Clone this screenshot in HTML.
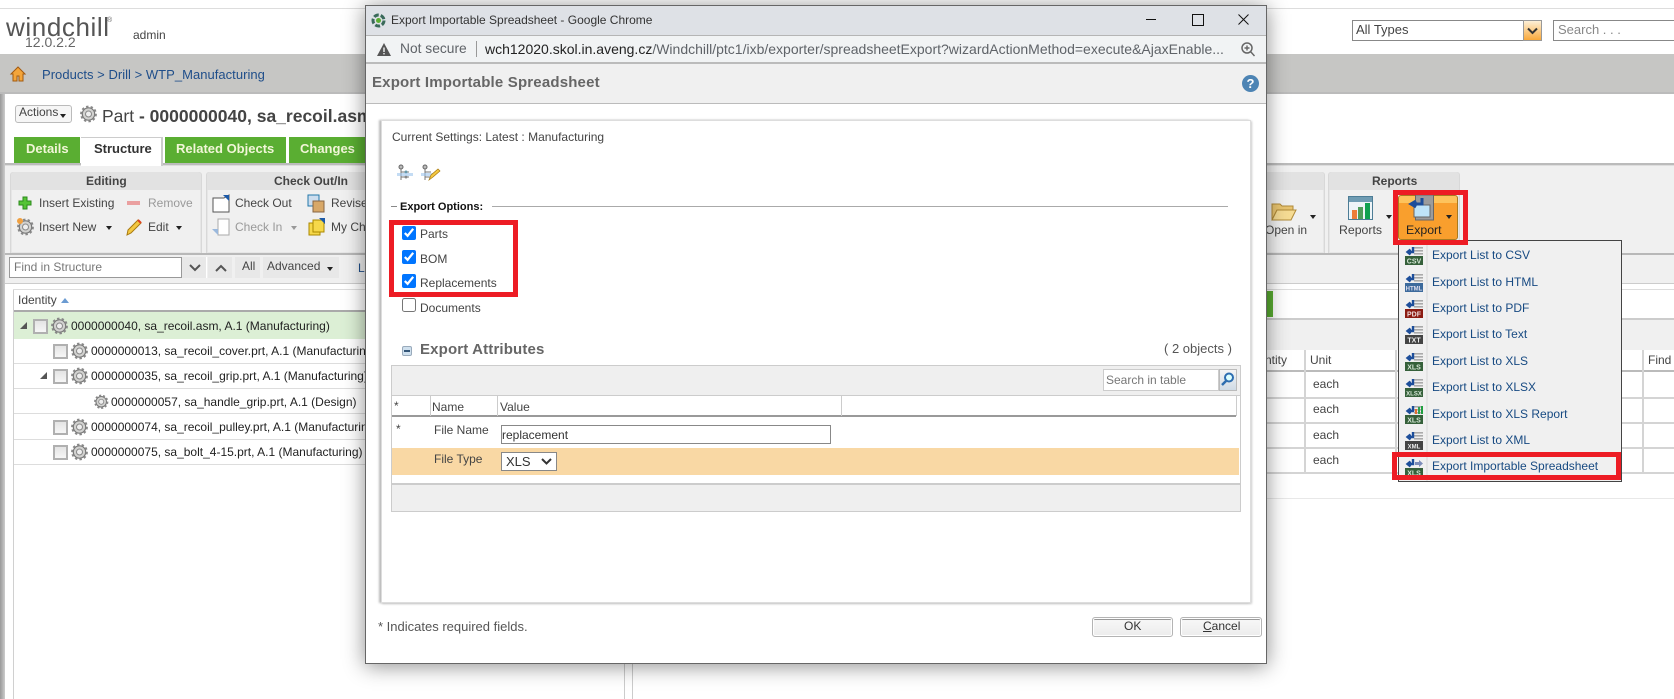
<!DOCTYPE html>
<html><head><meta charset="utf-8"><title>Export Importable Spreadsheet</title>
<style>
html,body{margin:0;padding:0;background:#fff;width:1674px;height:699px;overflow:hidden}
body{position:relative;font-family:"Liberation Sans",sans-serif;font-size:12px;color:#444}
.a{position:absolute}
.t{position:absolute;white-space:nowrap;line-height:16px;height:16px}
.car{position:absolute;width:0;height:0;border-left:3px solid transparent;border-right:3px solid transparent;border-top:4px solid #222}
.tab{position:absolute;top:137px;height:26px;background:#5aae32}
.b{font-weight:bold}
svg{position:absolute;overflow:visible}
.gh{position:absolute;top:172px;height:18px;background:#e2e2e2;border-radius:3px 3px 0 0}
.g{position:absolute;top:172px;height:81px;border:1px solid #d8d8d8;border-bottom:0;box-sizing:border-box;border-radius:3px 3px 0 0;box-shadow:0 0 0 1px #e6e6e6 inset}
.m{color:#174a82}
.line{position:absolute;background:#ccc}
.red{position:absolute;border:5px solid #ed1c24;box-sizing:border-box}
.cb{position:absolute;width:15px;height:15px;box-sizing:border-box;border:2px solid #b0b0b0;background:linear-gradient(#e4e4e4,#f6f6f6)}
input[type=checkbox]{position:absolute;margin:0;width:14px;height:14px}
.btn{position:absolute;height:20px;background:linear-gradient(#f8f8f8,#ececec);border:1px solid #b4b4b4;box-sizing:border-box;border-radius:3px;box-shadow:inset 0 0 0 1px #fff,inset 0 2px 0 #999}
</style></head><body>
<svg width="0" height="0" style="position:absolute"><defs>
<g id="gear"><circle cx="8.5" cy="8" r="6.2" fill="#d2d2d0" stroke="#777" stroke-width="1.2"/><circle cx="8.5" cy="8" r="7.4" fill="none" stroke="#888" stroke-width="2" stroke-dasharray="2.4 2.2"/><circle cx="8.5" cy="8" r="3" fill="#eee" stroke="#888"/></g>
<g id="exp"><rect x="9" y="0" width="9" height="1.6" fill="#aaa"/><rect x="9" y="3" width="9" height="1.6" fill="#aaa"/><rect x="9" y="6" width="9" height="1.6" fill="#aaa"/><path d="M8 0v5H3M5.5 2.5L2.5 5l3 2.5" fill="none" stroke="#1d4e9a" stroke-width="2.4"/></g>
</defs></svg>

<!-- top header -->
<div class="a" style="left:0;top:8px;width:1674px;height:1px;background:#ddd"></div>
<div class="t" style="left:6px;top:11px;height:32px;line-height:32px;font-size:26px;color:#555;letter-spacing:.6px;font-weight:normal">windchill</div>
<div class="t" style="left:107px;top:13px;font-size:7px;color:#666">®</div>
<div class="t" style="left:25px;top:34px;font-size:14px;color:#666">12.0.2.2</div>
<div class="t" style="left:133px;top:27px;color:#444">admin</div>

<div class="a" style="left:1352px;top:20px;width:190px;height:21px;border:1px solid #888;box-sizing:border-box;background:#fff"></div>
<div class="t" style="left:1356px;top:22px;font-size:13px;color:#444">All Types</div>
<div class="a" style="left:1523px;top:20px;width:19px;height:21px;background:linear-gradient(#fdf0d8,#f9a83a);border:1px solid #999;box-sizing:border-box"></div>
<svg style="left:1527px;top:27px" width="11" height="8"><path d="M1 1.5l4.5 4.5 4.5-4.5" fill="none" stroke="#333" stroke-width="2"/></svg>
<div class="a" style="left:1553px;top:20px;width:125px;height:21px;border:1px solid #888;box-sizing:border-box;background:#fff"></div>
<div class="t" style="left:1558px;top:22px;font-size:13px;color:#888">Search . . .</div>

<!-- grey nav -->
<div class="a" style="left:0;top:54px;width:1674px;height:38px;background:#c6c6c4"></div>
<div class="a" style="left:0;top:92px;width:1674px;height:2px;background:#bbb"></div>
<svg style="left:10px;top:66px" width="16" height="16"><path d="M8 1L1 8h2v7h4v-5h2v5h4V8h2z" fill="#f4a53a" stroke="#a25a10"/></svg>
<div class="t" style="left:42px;top:67px;font-size:13px;color:#1f4e8a;letter-spacing:.03px">Products &gt; Drill &gt; WTP_Manufacturing</div>

<div class="a" style="left:0;top:94px;width:5px;height:605px;background:linear-gradient(90deg,#999,#ccc)"></div>

<!-- title row -->
<div class="a" style="left:15px;top:105px;width:57px;height:18px;border:1px solid #bbb;border-radius:3px;box-sizing:border-box;background:#f6f6f6"></div>
<div class="t" style="left:19px;top:104px">Actions</div><div class="car" style="left:60px;top:114px"></div>
<svg style="left:80px;top:106px" width="17" height="16"><use href="#gear"/></svg>
<div class="t" style="left:102px;top:106px;height:20px;line-height:20px;font-size:17.5px;color:#444">Part<span class="b"> - 0000000040, sa_recoil.asm</span></div>

<!-- tabs -->
<div class="tab" style="left:14px;width:66px"></div><div class="t b" style="left:26px;top:141px;font-size:13px;color:#f2f6d8">Details</div>
<div class="a" style="left:81px;top:137px;width:82px;height:29px;background:#fff;border-top:1px solid #ccc;border-right:2px solid #ccc;box-sizing:border-box;z-index:2"></div><div class="t b" style="left:94px;top:141px;font-size:13px;color:#333;z-index:3">Structure</div>
<div class="tab" style="left:165px;width:121px"></div><div class="t b" style="left:176px;top:141px;font-size:13px;color:#f2f6d8">Related Objects</div>
<div class="tab" style="left:289px;width:76px"></div><div class="t b" style="left:300px;top:141px;font-size:13px;color:#f2f6d8">Changes</div>

<!-- toolbar -->
<div class="a" style="left:5px;top:163px;width:1669px;height:2px;background:#bbb"></div>
<div class="a" style="left:5px;top:165px;width:1669px;height:88px;background:#f0f0f0;border-top:1px solid #ddd;box-sizing:border-box"></div>
<div class="a" style="left:5px;top:253px;width:1669px;height:2px;background:#b8b8b8"></div>
<div class="g" style="left:10px;width:192px"></div><div class="gh" style="left:11px;width:190px"></div>
<div class="t b" style="left:86px;top:173px;color:#444;font-weight:bold">Editing</div>
<div class="g" style="left:206px;width:180px"></div><div class="gh" style="left:207px;width:178px"></div>
<div class="t b" style="left:274px;top:173px;color:#444">Check Out/In</div>
<svg style="left:18px;top:196px" width="14" height="14"><path d="M5 1h4v4h4v4H9v4H5V9H1V5h4z" fill="#55c435" stroke="#2b8a1c"/></svg>
<div class="t" style="left:39px;top:195px">Insert Existing</div>
<div class="a" style="left:127px;top:201px;width:13px;height:4px;background:#eaa0a0"></div>
<div class="t" style="left:148px;top:195px;color:#999">Remove</div>
<svg style="left:17px;top:219px" width="17" height="16"><use href="#gear"/></svg>
<div class="a" style="left:17px;top:218px;width:6px;height:6px;background:#f0a040;border-radius:3px"></div>
<div class="t" style="left:39px;top:219px">Insert New</div><div class="car" style="left:106px;top:226px"></div>
<svg style="left:125px;top:218px" width="18" height="18"><path d="M2 17l1-5L13 2l3 3L6 15z" fill="#f4c842" stroke="#a87a10"/><path d="M13 2l3 3" stroke="#e04020" stroke-width="2"/></svg>
<div class="t" style="left:148px;top:219px">Edit</div><div class="car" style="left:176px;top:226px"></div>
<svg style="left:212px;top:195px" width="18" height="18"><path d="M1 3h11l5-3v17H1z" fill="#fff" stroke="#555"/><path d="M11 0h6v6z" fill="#1d5aa8"/></svg>
<div class="t" style="left:235px;top:195px">Check Out</div>
<svg style="left:307px;top:195px" width="18" height="18"><rect x="1" y="0" width="11" height="11" fill="#cde" stroke="#27a"/><rect x="6" y="6" width="11" height="11" fill="#d8a868" stroke="#864"/></svg>
<div class="t" style="left:331px;top:195px">Revise</div>
<svg style="left:212px;top:218px" width="18" height="18"><path d="M6 1h11v16H6z" fill="#fff" stroke="#aaa"/><path d="M0 11h6v6z" fill="#9ab8dc"/></svg>
<div class="t" style="left:235px;top:219px;color:#999">Check In</div><div class="car" style="left:291px;top:226px;border-top-color:#999"></div>
<svg style="left:308px;top:218px" width="18" height="18"><rect x="1" y="5" width="11" height="12" fill="#f6d84a" stroke="#a80"/><rect x="5" y="2" width="11" height="12" fill="#f6d84a" stroke="#a80"/><path d="M11 0h6v6z" fill="#1d5aa8"/></svg>
<div class="t" style="left:331px;top:219px">My Ch</div>

<div class="g" style="left:1200px;width:125px"></div><div class="gh" style="left:1201px;width:123px"></div>
<div class="g" style="left:1328px;width:132px"></div><div class="gh" style="left:1329px;width:130px"></div>
<div class="t b" style="left:1372px;top:173px">Reports</div>
<svg style="left:1271px;top:202px" width="26" height="19"><path d="M1 18V2h8l2 2h11v4H6L1 18z" fill="#e8c470" stroke="#b08a38"/><path d="M1 18L6 8h19l-5 10z" fill="#f6dc94" stroke="#b08a38"/></svg>
<div class="t" style="left:1265px;top:222px;font-size:12px">Open in</div><div class="car" style="left:1310px;top:215px"></div>
<svg style="left:1348px;top:196px" width="25" height="25"><rect x=".5" y=".5" width="24" height="23" fill="#eef4f8" stroke="#4d7d96"/><rect x="1" y="1" width="23" height="5" fill="#6f9cb3"/><rect x="4" y="14" width="5" height="9" fill="#ee7d3a"/><rect x="10" y="11" width="5" height="12" fill="#4f9c5a"/><rect x="17" y="7" width="5" height="16" fill="#10a050"/></svg>
<div class="t" style="left:1339px;top:222px;font-size:12.3px">Reports</div><div class="car" style="left:1386px;top:215px"></div>

<div class="a" style="left:1398px;top:195px;width:60px;height:45px;background:linear-gradient(#fdc35c 0,#fdc35c 7px,#f99f2d 7px);border:1px solid #a87b20;box-sizing:border-box;border-radius:3px"></div>
<svg style="left:1409px;top:195px" width="26" height="26"><rect x="6.5" y="0" width="18" height="25" fill="#9c9c9c" stroke="#666"/><rect x="5" y="10" width="16" height="12" fill="#bfe4f8" stroke="#666"/><path d="M13 3v6H4M7 6L2 9l5 3" fill="none" stroke="#1d4e9a" stroke-width="3"/></svg>
<div class="t" style="left:1406px;top:222px;color:#222;font-size:12.3px">Export</div><div class="car" style="left:1446px;top:215px"></div>

<!-- find row -->
<div class="a" style="left:5px;top:255px;width:1669px;height:28px;background:#f0f0f0"></div>
<div class="a" style="left:5px;top:283px;width:1669px;height:1px;background:#ccc"></div>
<div class="a" style="left:9px;top:257px;width:173px;height:21px;background:#fff;border:1px solid #999;box-sizing:border-box"></div>
<div class="t" style="left:14px;top:259px;color:#777">Find in Structure</div>
<div class="a" style="left:182px;top:257px;width:24px;height:21px;background:#e8e8e8;border-right:1px solid #fff"></div>
<svg style="left:189px;top:264px" width="12" height="8"><path d="M1 1l5 5 5-5" fill="none" stroke="#555" stroke-width="2"/></svg>
<div class="a" style="left:208px;top:257px;width:24px;height:21px;background:#e8e8e8"></div>
<svg style="left:215px;top:265px" width="12" height="8"><path d="M1 6l5-5 5 5" fill="none" stroke="#555" stroke-width="2"/></svg>
<div class="a" style="left:235px;top:257px;width:25px;height:21px;background:#e8e8e8"></div>
<div class="t" style="left:242px;top:258px">All</div>
<div class="a" style="left:263px;top:257px;width:76px;height:21px;background:#e8e8e8"></div>
<div class="t" style="left:267px;top:258px">Advanced</div><div class="car" style="left:327px;top:267px"></div>
<div class="t" style="left:358px;top:260px;color:#1f4e8a">L</div>

<!-- left panel -->
<div class="a" style="left:13px;top:289px;width:1px;height:410px;background:#d0d0d0"></div>
<div class="a" style="left:13px;top:289px;width:360px;height:1px;background:#ddd"></div>
<div class="t" style="left:18px;top:292px">Identity</div>
<svg style="left:61px;top:298px" width="8" height="5"><path d="M0 5L4 0l4 5z" fill="#6b9bd2"/></svg>
<div class="a" style="left:14px;top:310px;width:360px;height:2px;background:#aaa"></div>
<div class="a" style="left:14px;top:312px;width:360px;height:27px;background:#dcefd5"></div>
<div class="line" style="left:14px;top:363px;width:360px;height:1px;background:#ddd"></div>
<div class="line" style="left:14px;top:388px;width:360px;height:1px;background:#ddd"></div>
<div class="line" style="left:14px;top:413px;width:360px;height:1px;background:#ddd"></div>
<div class="line" style="left:14px;top:439px;width:360px;height:1px;background:#ddd"></div>
<div class="line" style="left:14px;top:464px;width:360px;height:1px;background:#ddd"></div>
<svg style="left:20px;top:322px" width="8" height="8"><path d="M0 7L7 0v7z" fill="#555"/></svg>
<div class="cb" style="left:33px;top:319px"></div>
<svg style="left:51px;top:318px" width="17" height="16"><use href="#gear"/></svg>
<div class="t" style="left:71px;top:318px;color:#222">0000000040, sa_recoil.asm, A.1 (Manufacturing)</div>
<div class="cb" style="left:53px;top:344px"></div>
<svg style="left:71px;top:343px" width="17" height="16"><use href="#gear"/></svg>
<div class="t" style="left:91px;top:343px;color:#222;width:274px;overflow:hidden">0000000013, sa_recoil_cover.prt, A.1 (Manufacturing)</div>
<svg style="left:40px;top:372px" width="8" height="8"><path d="M0 7L7 0v7z" fill="#555"/></svg>
<div class="cb" style="left:53px;top:369px"></div>
<svg style="left:71px;top:368px" width="17" height="16"><use href="#gear"/></svg>
<div class="t" style="left:91px;top:368px;color:#222;width:274px;overflow:hidden">0000000035, sa_recoil_grip.prt, A.1 (Manufacturing)</div>
<svg style="left:94px;top:395px" width="14" height="14"><g transform="scale(.85)"><use href="#gear"/></g></svg>
<div class="t" style="left:111px;top:394px;color:#222">0000000057, sa_handle_grip.prt, A.1 (Design)</div>
<div class="cb" style="left:53px;top:420px"></div>
<svg style="left:71px;top:419px" width="17" height="16"><use href="#gear"/></svg>
<div class="t" style="left:91px;top:419px;color:#222;width:274px;overflow:hidden">0000000074, sa_recoil_pulley.prt, A.1 (Manufacturing)</div>
<div class="cb" style="left:53px;top:445px"></div>
<svg style="left:71px;top:444px" width="17" height="16"><use href="#gear"/></svg>
<div class="t" style="left:91px;top:444px;color:#222">0000000075, sa_bolt_4-15.prt, A.1 (Manufacturing)</div>
<div class="a" style="left:624px;top:660px;width:1px;height:39px;background:#ccc"></div>
<div class="a" style="left:632px;top:660px;width:1px;height:39px;background:#ccc"></div>

<!-- right panel -->
<div class="a" style="left:1267px;top:289px;width:407px;height:31px;background:#fff;border-top:1px solid #ddd;border-bottom:2px solid #ccc;box-sizing:border-box"></div>
<div class="a" style="left:1267px;top:291px;width:6px;height:26px;background:#5aae32"></div>
<div class="a" style="left:1267px;top:320px;width:407px;height:30px;background:#f0f0f0"></div>
<div class="a" style="left:1267px;top:370px;width:407px;height:2px;background:#bbb"></div>
<div class="t" style="left:1267px;top:352px;width:20px;overflow:hidden;direction:rtl;text-align:right">ntity</div>
<div class="t" style="left:1310px;top:352px">Unit</div>
<div class="t" style="left:1648px;top:352px">Find</div>
<div class="line" style="left:1304px;top:350px;width:2px;height:123px;background:#d4d4d4"></div>
<div class="line" style="left:1395px;top:350px;width:2px;height:123px;background:#d4d4d4"></div>
<div class="line" style="left:1642px;top:350px;width:2px;height:123px;background:#d4d4d4"></div>
<div class="line" style="left:1267px;top:397px;width:407px;height:2px;background:#d4d4d4"></div>
<div class="line" style="left:1267px;top:422px;width:407px;height:2px;background:#d4d4d4"></div>
<div class="line" style="left:1267px;top:447px;width:407px;height:2px;background:#d4d4d4"></div>
<div class="line" style="left:1267px;top:472px;width:407px;height:2px;background:#d4d4d4"></div>
<div class="line" style="left:1267px;top:498px;width:407px;height:1px;background:#e8e8e8"></div>
<div class="t" style="left:1313px;top:376px">each</div>
<div class="t" style="left:1313px;top:401px">each</div>
<div class="t" style="left:1313px;top:427px">each</div>
<div class="t" style="left:1313px;top:452px">each</div>

<!-- menu -->
<div class="a" style="left:1398px;top:240px;width:224px;height:242px;background:#f0f0f0;border:1px solid #444;box-sizing:border-box"></div>
<div class="a" style="left:1426px;top:241px;width:2px;height:240px;background:#e4e4e4"></div>
<svg style="left:1405px;top:247px" width="18" height="18"><use href="#exp"/><rect y="9" width="18" height="9" fill="#35603a"/><text x="9" y="16.5" font-size="7" font-weight="bold" fill="#d8e8d8" text-anchor="middle" font-family="Liberation Sans">CSV</text></svg>
<svg style="left:1405px;top:274px" width="18" height="18"><use href="#exp"/><rect y="9" width="18" height="9" fill="#3c6a9c"/><text x="9" y="16.5" font-size="6" font-weight="bold" fill="#dde" text-anchor="middle" font-family="Liberation Sans">HTML</text></svg>
<svg style="left:1405px;top:300px" width="18" height="18"><use href="#exp"/><rect y="9" width="18" height="9" fill="#8c1c12"/><text x="9" y="16.5" font-size="7" font-weight="bold" fill="#edd" text-anchor="middle" font-family="Liberation Sans">PDF</text></svg>
<svg style="left:1405px;top:326px" width="18" height="18"><use href="#exp"/><rect y="9" width="18" height="9" fill="#444"/><text x="9" y="16.5" font-size="7" font-weight="bold" fill="#eee" text-anchor="middle" font-family="Liberation Sans">TXT</text></svg>
<svg style="left:1405px;top:353px" width="18" height="18"><use href="#exp"/><rect y="9" width="18" height="9" fill="#35603a"/><text x="9" y="16.5" font-size="7" font-weight="bold" fill="#d8e8d8" text-anchor="middle" font-family="Liberation Sans">XLS</text></svg>
<svg style="left:1405px;top:379px" width="18" height="18"><use href="#exp"/><rect y="9" width="18" height="9" fill="#35603a"/><text x="9" y="16.5" font-size="6" font-weight="bold" fill="#d8e8d8" text-anchor="middle" font-family="Liberation Sans">XLSX</text></svg>
<svg style="left:1405px;top:406px" width="18" height="18"><use href="#exp"/><rect x="10" y="3" width="2" height="5" fill="#e07030"/><rect x="13" y="1" width="2" height="7" fill="#30a050"/><rect x="16" y="0" width="2" height="8" fill="#20a040"/><rect y="9" width="18" height="9" fill="#35603a"/><text x="9" y="16.5" font-size="7" font-weight="bold" fill="#d8e8d8" text-anchor="middle" font-family="Liberation Sans">XLS</text></svg>
<svg style="left:1405px;top:432px" width="18" height="18"><use href="#exp"/><rect y="9" width="18" height="9" fill="#444"/><text x="9" y="16.5" font-size="6" font-weight="bold" fill="#eee" text-anchor="middle" font-family="Liberation Sans">XML</text></svg>
<svg style="left:1405px;top:459px" width="18" height="18"><path d="M8 0v5H3M5.5 2.5L2.5 5l3 2.5" fill="none" stroke="#1d4e9a" stroke-width="2.4"/><path d="M10 3h4V1l4 3.5L14 8V6h-4z" fill="#7c8cb8"/><rect y="9" width="18" height="9" fill="#35603a"/><text x="9" y="16.5" font-size="7" font-weight="bold" fill="#d8e8d8" text-anchor="middle" font-family="Liberation Sans">XLS</text></svg>
<div class="t m" style="left:1432px;top:247px">Export List to CSV</div>
<div class="t m" style="left:1432px;top:274px">Export List to HTML</div>
<div class="t m" style="left:1432px;top:300px">Export List to PDF</div>
<div class="t m" style="left:1432px;top:326px">Export List to Text</div>
<div class="t m" style="left:1432px;top:353px">Export List to XLS</div>
<div class="t m" style="left:1432px;top:379px">Export List to XLSX</div>
<div class="t m" style="left:1432px;top:406px">Export List to XLS Report</div>
<div class="t m" style="left:1432px;top:432px">Export List to XML</div>
<div class="t m" style="left:1432px;top:458px">Export Importable Spreadsheet</div>
<div class="red" style="left:1393px;top:190px;width:75px;height:55px"></div>
<div class="red" style="left:1392px;top:452px;width:229px;height:28px"></div>

<!-- dialog -->
<div class="a" style="left:365px;top:5px;width:902px;height:659px;background:#fff;border:1px solid #666;box-sizing:border-box;box-shadow:0 2px 20px rgba(0,0,0,.45);z-index:10;overflow:hidden">
 <div style="position:absolute;left:-366px;top:-6px;width:1674px;height:699px;font-size:12px">
  <div class="a" style="left:365px;top:5px;width:902px;height:30px;background:#dee1e6"></div>
  <div class="a" style="left:365px;top:35px;width:902px;height:1px;background:#b5b5b5"></div>
  <svg style="left:371px;top:13px" width="15" height="15"><circle cx="7.5" cy="7.5" r="5.5" fill="none" stroke="#3a6a5a" stroke-width="3" stroke-dasharray="5 2"/><circle cx="7.5" cy="7.5" r="2.5" fill="#5aae32"/></svg>
  <div class="t" style="left:391px;top:12px;color:#333">Export Importable Spreadsheet - Google Chrome</div>
  <div class="a" style="left:1146px;top:19px;width:10px;height:1px;background:#111"></div>
  <div class="a" style="left:1192px;top:14px;width:10px;height:10px;border:1px solid #111"></div>
  <svg style="left:1238px;top:14px" width="11" height="11"><path d="M.5.5l10 10M10.5.5l-10 10" stroke="#111" fill="none"/></svg>

  <div class="a" style="left:365px;top:36px;width:902px;height:26px;background:#f1f3f4"></div>
  <div class="a" style="left:365px;top:62px;width:902px;height:2px;background:#bbb"></div>
  <svg style="left:377px;top:43px" width="14" height="13"><path d="M7 0l7 13H0z" fill="#555"/><rect x="6.3" y="4.5" width="1.4" height="4.5" fill="#f1f3f4"/><rect x="6.3" y="10" width="1.4" height="1.4" fill="#f1f3f4"/></svg>
  <div class="t" style="left:400px;top:41px;font-size:13.8px;color:#5f6368">Not secure</div>
  <div class="a" style="left:476px;top:41px;width:1px;height:16px;background:#999"></div>
  <div class="t" style="left:485px;top:41px;font-size:14px;color:#5f6368;width:738px;overflow:hidden"><span style="color:#222">wch12020.skol.in.aveng.cz</span>/Windchill/ptc1/ixb/exporter/spreadsheetExport?wizardActionMethod=execute&amp;AjaxEnable...</div>
  <svg style="left:1241px;top:42px" width="14" height="15"><circle cx="6" cy="6" r="5" fill="none" stroke="#666" stroke-width="1.5"/><path d="M9.5 9.5l4 4.5M3.5 6h5M6 3.5v5" stroke="#666" stroke-width="1.4" fill="none"/></svg>

  <div class="a" style="left:365px;top:64px;width:902px;height:39px;background:#f0f0f0"></div>
  <div class="a" style="left:365px;top:103px;width:902px;height:1px;background:#bbb"></div>
  <div class="t b" style="left:372px;top:75px;font-size:15px;color:#666;letter-spacing:.18px">Export Importable Spreadsheet</div>
  <svg style="left:1242px;top:75px" width="17" height="17"><circle cx="8.5" cy="8.5" r="8.5" fill="#4d84b4"/><text x="8.5" y="13" font-size="13" font-weight="bold" fill="#fff" text-anchor="middle" font-family="Liberation Sans">?</text></svg>

  <!-- inner panel -->
  <div class="a" style="left:381px;top:120px;width:870px;height:483px;border:1px solid #ddd;box-sizing:border-box;box-shadow:-2px 0 2px #bbb,1px 1px 2px #ccc;background:#fff"></div>
  <div class="t" style="left:392px;top:129px;color:#444">Current Settings: Latest : Manufacturing</div>
  <svg style="left:397px;top:164px" width="17" height="18"><path d="M4 3v13M4 8h8M4 13h8" stroke="#777" fill="none"/><circle cx="4" cy="3" r="2" fill="#bbb" stroke="#666"/><circle cx="9" cy="8" r="1.5" fill="#69a"/><circle cx="9" cy="13" r="1.5" fill="#888"/><rect x="0" y="9" width="16" height="3" fill="#9cc4ec" opacity=".6"/></svg>
  <svg style="left:421px;top:164px" width="19" height="18"><path d="M4 3v13M4 8h6M4 13h6" stroke="#777" fill="none"/><circle cx="4" cy="3" r="2" fill="#bbb" stroke="#666"/><rect x="0" y="9" width="12" height="3" fill="#9cc4ec" opacity=".6"/><path d="M8 16l2-5 7-6 2 2-7 6z" fill="#f4c842" stroke="#a87a10" stroke-width=".7"/></svg>
  <div class="a" style="left:391px;top:206px;width:6px;height:1px;background:#888"></div>
  <div class="t b" style="left:400px;top:199px;color:#111;font-size:11px">Export Options:</div>
  <div class="a" style="left:492px;top:206px;width:736px;height:1px;background:#aaa"></div>
  <input type="checkbox" checked style="left:402px;top:226px">
  <input type="checkbox" checked style="left:402px;top:250px">
  <input type="checkbox" checked style="left:402px;top:274px">
  <input type="checkbox" style="left:402px;top:298px">
  <div class="t" style="left:420px;top:226px">Parts</div>
  <div class="t" style="left:420px;top:251px">BOM</div>
  <div class="t" style="left:420px;top:275px">Replacements</div>
  <div class="t" style="left:420px;top:300px">Documents</div>
  <div class="red" style="left:389px;top:220px;width:129px;height:77px"></div>

  <div class="a" style="left:402px;top:346px;width:10px;height:10px;background:#cfe0ee;border:1px solid #9ab;box-sizing:border-box;border-radius:2px"></div>
  <div class="a" style="left:404px;top:350px;width:6px;height:2px;background:#357"></div>
  <div class="t b" style="left:420px;top:341px;height:18px;line-height:18px;font-size:15px;color:#666;letter-spacing:.15px">Export Attributes</div>
  <div class="t" style="left:1164px;top:341px;font-size:13px;color:#555">( 2 objects )</div>

  <!-- table -->
  <div class="a" style="left:391px;top:365px;width:850px;height:147px;border:1px solid #ccc;box-sizing:border-box;background:#fff"></div>
  <div class="a" style="left:392px;top:366px;width:848px;height:29px;background:#efefef;border-bottom:1px solid #ccc"></div>
  <div class="a" style="left:1103px;top:369px;width:116px;height:22px;background:#fff;border:1px solid #ccc;box-sizing:border-box"></div>
  <div class="t" style="left:1106px;top:372px;color:#777">Search in table</div>
  <div class="a" style="left:1219px;top:369px;width:18px;height:22px;background:linear-gradient(#f4f4f4,#cfdbe6);border:1px solid #bbb;box-sizing:border-box"></div>
  <svg style="left:1220px;top:372px" width="15" height="15"><circle cx="9" cy="5.5" r="4" fill="#dff" stroke="#2d6db0" stroke-width="2"/><path d="M6 9l-4 4" stroke="#2d6db0" stroke-width="2.5"/></svg>
  <div class="a" style="left:392px;top:415px;width:844px;height:2px;background:#999"></div>
  <div class="a" style="left:430px;top:396px;width:1px;height:20px;background:#ccc"></div>
  <div class="a" style="left:497px;top:396px;width:1px;height:20px;background:#ccc"></div>
  <div class="a" style="left:841px;top:396px;width:1px;height:20px;background:#ccc"></div>
  <div class="a" style="left:1236px;top:396px;width:1px;height:20px;background:#ccc"></div>
  <div class="t" style="left:394px;top:398px">*</div>
  <div class="t" style="left:432px;top:399px">Name</div>
  <div class="t" style="left:500px;top:399px">Value</div>
  <div class="t" style="left:396px;top:421px">*</div>
  <div class="t" style="left:434px;top:422px">File Name</div>
  <div class="a" style="left:501px;top:425px;width:330px;height:19px;border:1px solid #888;box-sizing:border-box;background:#fff"></div>
  <div class="t" style="left:502px;top:427px;color:#333">replacement</div>
  <div class="a" style="left:392px;top:448px;width:847px;height:27px;background:#f9d8a4"></div>
  <div class="t" style="left:434px;top:451px">File Type</div>
  <div class="a" style="left:501px;top:452px;width:56px;height:19px;border:1px solid #888;box-sizing:border-box;background:#fff"></div>
  <div class="t" style="left:506px;top:454px;font-size:13px;color:#333">XLS</div>
  <svg style="left:541px;top:458px" width="11" height="8"><path d="M1 1l4.5 4.5L10 1" fill="none" stroke="#333" stroke-width="2"/></svg>
  <div class="a" style="left:392px;top:483px;width:848px;height:28px;background:#efefef;border-top:2px solid #ccc;box-sizing:border-box"></div>

  <div class="t" style="left:378px;top:619px;font-size:13px;color:#555">* Indicates required fields.</div>
  <div class="btn" style="left:1092px;top:617px;width:81px"></div>
  <div class="t" style="left:1124px;top:618px;color:#333">OK</div>
  <div class="btn" style="left:1180px;top:617px;width:82px"></div>
  <div class="t" style="left:1203px;top:618px;color:#333"><u>C</u>ancel</div>
 </div>
</div>
</body></html>
